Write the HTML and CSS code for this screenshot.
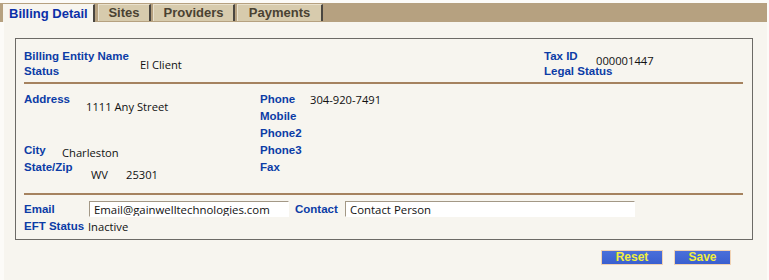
FILE: index.html
```html
<!DOCTYPE html>
<html>
<head>
<meta charset="utf-8">
<link rel="stylesheet" href="styles.css">
</head>
<body>
<div class="tabbar">
  <div class="tab tab-active">Billing Detail</div>
  <div class="tab tab-sites">Sites</div>
  <div class="tab tab-providers">Providers</div>
  <div class="tab tab-payments">Payments</div>
</div>
<div class="panel">
  <div class="box">
    <div class="sec-top">
      <div class="lbl bn">Billing Entity Name</div>
      <div class="lbl st">Status</div>
      <div class="val client">El Client</div>
      <div class="lbl tax">Tax ID</div>
      <div class="val taxval">000001447</div>
      <div class="lbl legal">Legal Status</div>
    </div>
    <div class="sep"></div>
    <div class="sec-addr">
      <div class="addr-col">
        <div class="row r1"><span class="lbl w-addr">Address</span><span class="val pad7">1111 Any Street</span></div>
        <div class="row r4"><span class="lbl w-city">City</span><span class="val pad2">Charleston</span></div>
        <div class="row r5"><span class="lbl w-state">State/Zip</span><span class="val pad7 w-wv">WV</span><span class="val pad7">25301</span></div>
      </div>
      <div class="phone-col">
        <div class="row"><span class="lbl w-phone">Phone</span><span class="val">304-920-7491</span></div>
        <div class="row"><span class="lbl w-phone">Mobile</span></div>
        <div class="row"><span class="lbl w-phone">Phone2</span></div>
        <div class="row"><span class="lbl w-phone">Phone3</span></div>
        <div class="row"><span class="lbl w-phone">Fax</span></div>
      </div>
    </div>
    <div class="sep sep2"></div>
    <div class="sec-contact">
      <div class="row">
        <span class="lbl w-email">Email</span>
        <input class="inp inp-email" type="text" value="Email@gainwelltechnologies.com">
        <span class="lbl w-contact">Contact</span>
        <input class="inp inp-contact" type="text" value="Contact Person">
      </div>
      <div class="row"><span class="lbl w-eft">EFT Status</span><span class="val">Inactive</span></div>
    </div>
  </div>
  <div class="actions">
    <div class="btn btn-reset">Reset</div>
    <div class="btn btn-save">Save</div>
  </div>
</div>
</body>
</html>
```
FILE: styles.css
```css
html, body {
  margin: 0;
  padding: 0;
}
body {
  background: #fcfbf8;
  width: 769px;
  height: 280px;
  overflow: hidden;
  font-family: "Liberation Sans", Arial, sans-serif;
}
.tabbar {
  margin-top: 3px;
  height: 19px;
  width: 767px;
  background: #b6a180;
  display: flex;
  align-items: flex-end;
  padding-left: 3px;
  box-sizing: border-box;
}
.tab {
  box-sizing: border-box;
  font-weight: bold;
  font-size: 13px;
  line-height: 15px;
  color: #4a4232;
  background: #d7cbad;
  border-top: 1px solid #e9e1cd;
  border-left: 1px solid #e9e1cd;
  border-right: 2px solid #4a4640;
  height: 17px;
  margin-bottom: 1px;
  text-align: center;
  margin-left: 2px;
}
.tab-active {
  margin-left: 0;
  margin-bottom: 0;
  height: 18px;
  width: 92px;
  background: #f7f5ef;
  border-top: 1px solid #f7f5ef;
  border-left: 1px solid #f7f5ef;
  color: #0b30a8;
  text-align: left;
  padding-left: 5px;
  line-height: 17px;
}
.tab-sites { width: 53px; margin-left: 3px; }
.tab-providers { width: 82px; }
.tab-payments { width: 86px; }

.panel {
  margin-left: 4px;
  width: 763px;
  height: 258px;
  background: #f7f5ef;
  padding-top: 16px;
  box-sizing: border-box;
}
.box {
  margin-left: 11px;
  width: 738px;
  box-sizing: border-box;
  border: 1px solid #6c6a66;
  padding: 10px 9px 4px 8px;
}
.lbl {
  font-family: "Liberation Sans", Arial, sans-serif;
  font-weight: bold;
  font-size: 11.5px;
  color: #0c3ca6;
  white-space: nowrap;
}
.val {
  font-family: "Open Sans", "Liberation Sans", sans-serif;
  font-size: 11.2px;
  color: #111;
  white-space: nowrap;
  line-height: 17px;
}
.sec-top {
  display: grid;
  grid-template-columns: 116px 404px 52px 1fr;
  grid-template-rows: 15px 15px;
  line-height: 15px;
}
.bn { grid-column: 1; grid-row: 1; }
.st { grid-column: 1; grid-row: 2; }
.client { grid-column: 2; grid-row: 1 / span 2; padding-top: 8px; line-height: 15px; }
.tax { grid-column: 3; grid-row: 1; }
.taxval { grid-column: 4; grid-row: 1 / span 2; padding-top: 4px; line-height: 15px; }
.legal { grid-column: 3 / span 2; grid-row: 2; }

.sep {
  margin-top: 3px;
  height: 2px;
  background: #a5825f;
  border-bottom: 0;
}
.sep2 { margin-top: 17px; }

.sec-addr {
  display: flex;
  padding-top: 7px;
}
.addr-col {
  width: 236px;
  display: grid;
  grid-template-rows: repeat(5, 17px);
}
.r1 { grid-row: 1; }
.r4 { grid-row: 4; }
.r5 { grid-row: 5; }
.row {
  display: flex;
  align-items: flex-start;
  height: 17px;
  line-height: 17px;
}
.pad7 { padding-top: 7px; }
.pad2 { padding-top: 2px; }
.w-addr { width: 62px; }
.w-city { width: 38px; }
.w-state { width: 67px; }
.w-wv { width: 35px; }
.w-phone { width: 50px; }

.sec-contact {
  padding-top: 6px;
}
.w-email { width: 65px; }
.w-contact { width: 50px; }
.w-eft { width: 64px; }
.inp {
  box-sizing: border-box;
  height: 16px;
  margin: 0;
  padding: 0 4px;
  border-style: solid;
  border-width: 1px;
  border-color: #a39886 #ffffff #ffffff #a39886;
  background: #ffffff;
  font-family: "Open Sans", "Liberation Sans", sans-serif;
  font-size: 11.4px;
  color: #111;
  outline: none;
}
.inp-email { width: 200px; margin-right: 6px; }
.inp-contact { width: 290px; }

.actions {
  display: flex;
  justify-content: flex-end;
  gap: 11px;
  margin-top: 10px;
  padding-right: 36px;
}
.btn {
  box-sizing: border-box;
  height: 15px;
  border: 1px solid #f0d2b4;
  background: linear-gradient(#4a6fda, #3a5fcf);
  color: #f2ee3c;
  font-family: "Liberation Sans", Arial, sans-serif;
  font-weight: bold;
  font-size: 12px;
  line-height: 13px;
  text-align: center;
}
.btn-reset { width: 62px; }
.btn-save { width: 57px; }
```
